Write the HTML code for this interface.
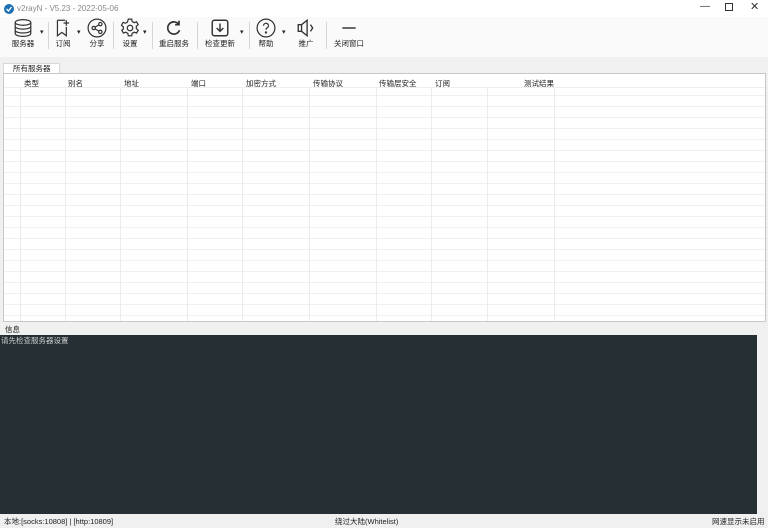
<!DOCTYPE html><html><head><meta charset="utf-8"><style>
*{margin:0;padding:0;box-sizing:border-box}
body{width:768px;height:528px;overflow:hidden;background:#f0f0f0;font-family:"Liberation Sans","Noto Sans CJK SC",sans-serif;font-size:8px;color:#222;position:relative}
.a{position:absolute}
.tb{left:0;top:0;width:768px;height:17px;background:#fff}
.bar{top:17px;left:0;width:768px;height:40px;background:#fafafa}
.btn{position:absolute;top:18px;text-align:center;font-size:7.5px;line-height:9px}
.btn svg{display:block;margin:0 auto 1px}
.sep{position:absolute;top:22px;width:1px;height:27px;background:#d6d6d6}
.dd{position:absolute;top:28px;font-size:7px}
.grid{left:3px;top:73px;width:763px;height:249px;background:#fff;border:1px solid #c8c8c8;
background-image:repeating-linear-gradient(to bottom,transparent 0,transparent 10px,#f0f0f0 10px,#f0f0f0 11px)}
.col{position:absolute;top:0;bottom:0;width:1px;background:#ececec}
.h{position:absolute;top:4px;font-size:7.5px}
</style></head><body>
<div class="a tb"></div>
<svg class="a" style="left:4px;top:4px" width="10" height="10"><circle cx="5" cy="5" r="5" fill="#1c6fb5"/><path d="M2.5 5l2 2 3-4" stroke="#fff" fill="none" stroke-width="1.3"/></svg>
<div class="a" style="left:17px;top:4px;font-size:8px;color:#888">v2rayN - V5.23 - 2022-05-06</div>
<div class="a" style="left:700px;top:1px;font-size:10px;color:#333">—</div>
<div class="a" style="left:725px;top:3px;width:8px;height:8px;border:1px solid #333"></div>
<div class="a" style="left:750px;top:0px;font-size:11px;color:#333">✕</div>
<div class="a bar"></div>
<div class="btn" style="left:8px;width:30px"><svg width="20" height="20" viewBox="0 0 18 18" fill="none" stroke="#333" stroke-width="1.1"><ellipse cx="9" cy="4" rx="7" ry="2.5"/><path d="M2 4v10c0 1.4 3 2.5 7 2.5s7-1.1 7-2.5V4M2 7.5c0 1.4 3 2.5 7 2.5s7-1.1 7-2.5M2 11c0 1.4 3 2.5 7 2.5s7-1.1 7-2.5"/></svg>服务器</div>
<div class="dd" style="left:40px">▾</div>
<div class="sep" style="left:48px"></div>
<div class="btn" style="left:52px;width:22px"><svg width="20" height="20" viewBox="0 0 18 18" fill="none" stroke="#333" stroke-width="1.1"><path d="M4 2h7M4 2v14l4-3 4 3V8M12 2v5M9.5 4.5h5"/></svg>订阅</div>
<div class="dd" style="left:77px">▾</div>
<div class="btn" style="left:86px;width:22px"><svg width="20" height="20" viewBox="0 0 18 18" fill="none" stroke="#333" stroke-width="1.1"><circle cx="9" cy="9" r="8"/><circle cx="12" cy="5.5" r="1.5"/><circle cx="6" cy="9" r="1.5"/><circle cx="12" cy="12.5" r="1.5"/><path d="M7.3 8.2l3.4-2M7.3 9.8l3.4 2"/></svg>分享</div>
<div class="sep" style="left:113px"></div>
<div class="btn" style="left:119px;width:22px"><svg width="20" height="20" viewBox="0 0 18 18" fill="none" stroke="#333" stroke-width="1.1"><circle cx="9" cy="9" r="2.5"/><path d="M7.5 1h3l.5 2.2 1.8 1 2.1-.8 1.5 2.6-1.7 1.5v2l1.7 1.5-1.5 2.6-2.1-.8-1.8 1-.5 2.2h-3l-.5-2.2-1.8-1-2.1.8-1.5-2.6L3 10V8L1.3 6.5l1.5-2.6 2.1.8 1.8-1z"/></svg>设置</div>
<div class="dd" style="left:143px">▾</div>
<div class="sep" style="left:152px"></div>
<div class="btn" style="left:158px;width:32px"><svg width="20" height="20" viewBox="0 0 18 18" fill="none" stroke="#333" stroke-width="1.5"><path d="M13.5 6A5.5 5.5 0 1 0 14 11M13.5 2.5V6H10"/></svg>重启服务</div>
<div class="sep" style="left:197px"></div>
<div class="btn" style="left:203px;width:34px"><svg width="20" height="20" viewBox="0 0 18 18" fill="none" stroke="#333" stroke-width="1.3"><rect x="2" y="2" width="14" height="14" rx="2"/><path d="M9 5v7M6 9l3 3 3-3"/></svg>检查更新</div>
<div class="dd" style="left:240px">▾</div>
<div class="sep" style="left:249px"></div>
<div class="btn" style="left:255px;width:22px"><svg width="20" height="20" viewBox="0 0 18 18" fill="none" stroke="#333" stroke-width="1.1"><circle cx="9" cy="9" r="8"/><path d="M6.8 7a2.2 2.2 0 1 1 3 2c-.7.3-.8.8-.8 1.6"/><circle cx="9" cy="13" r=".5" fill="#333"/></svg>帮助</div>
<div class="dd" style="left:282px">▾</div>
<div class="btn" style="left:295px;width:22px"><svg width="20" height="20" viewBox="0 0 18 18" fill="none" stroke="#333" stroke-width="1.2"><path d="M2 6h3l5-4v14l-5-4H2zM5 6v6M13 6l2 3-2 3"/></svg>推广</div>
<div class="sep" style="left:326px"></div>
<div class="btn" style="left:333px;width:32px"><svg width="20" height="20" viewBox="0 0 18 18"><path d="M3 9h12" stroke="#333" stroke-width="1.3"/></svg>关闭窗口</div>
<div class="a" style="left:3px;top:63px;width:57px;height:11px;background:#fff;border:1px solid #d8d8d8;border-bottom:none;font-size:7.5px;padding-left:9px;line-height:10px">所有服务器</div>
<div class="a grid">
<div class="col" style="left:16px"></div><div class="col" style="left:61px"></div><div class="col" style="left:116px"></div><div class="col" style="left:183px"></div><div class="col" style="left:238px"></div><div class="col" style="left:305px"></div><div class="col" style="left:372px"></div><div class="col" style="left:427px"></div><div class="col" style="left:483px"></div><div class="col" style="left:550px"></div>
<div class="a" style="left:0;top:0;width:761px;height:14px;background:#fff;border-bottom:1px solid #eee"></div>
<span class="h" style="left:20px">类型</span><span class="h" style="left:64px">别名</span><span class="h" style="left:120px">地址</span><span class="h" style="left:187px">端口</span><span class="h" style="left:242px">加密方式</span><span class="h" style="left:309px">传输协议</span><span class="h" style="left:375px">传输层安全</span><span class="h" style="left:431px">订阅</span><span class="h" style="left:520px">测试结果</span>
</div>
<div class="a" style="left:5px;top:324px;font-size:7.5px">信息</div>
<div class="a" style="left:0;top:335px;width:757px;height:179px;background:#263034;color:#ccc;font-size:7.5px;padding-left:1px">请先检查服务器设置</div>
<div class="a" style="left:757px;top:335px;width:11px;height:179px;background:#f0f0f0"></div>
<div class="a" style="left:4px;top:516px;font-size:7.5px">本地:[socks:10808] | [http:10809]</div>
<div class="a" style="left:335px;top:516px;font-size:7.5px">绕过大陆(Whitelist)</div>
<div class="a" style="left:712px;top:516px;font-size:7.5px">网速显示未启用</div>
</body></html>
